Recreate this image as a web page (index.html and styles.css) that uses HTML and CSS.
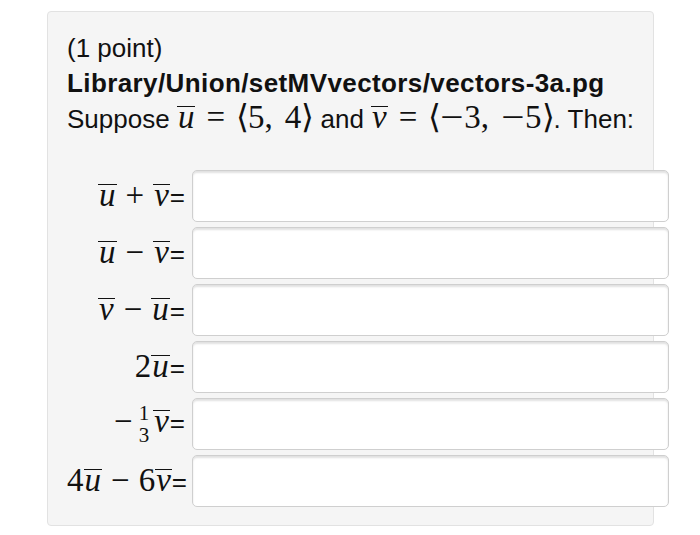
FILE: index.html
```html
<!DOCTYPE html>
<html>
<head>
<meta charset="utf-8">
<link rel="stylesheet" href="styles.css">
</head>
<body>
<div class="panel">
  <div class="line">(1 point)</div>
  <div class="line bold">Library/Union/setMVvectors/vectors-3a.pg</div>
  <div class="line">Suppose <span class="m"><span class="ov">u</span><span class="rel">=</span><span class="br">⟨</span>5,<span class="sp"></span>4<span class="br">⟩</span></span> and <span class="m"><span class="ov">v</span><span class="rel">=</span><span class="br">⟨</span><span class="um">−</span>3,<span class="sp"></span><span class="um">−</span>5<span class="br">⟩</span></span>. Then:</div>
  <div class="rows">
    <div class="row"><div class="lab"><span class="m"><span class="ov">u</span><span class="op">+</span><span class="ov">v</span></span>=</div><div class="inp"></div></div>
    <div class="row"><div class="lab"><span class="m"><span class="ov">u</span><span class="op">−</span><span class="ov">v</span></span>=</div><div class="inp"></div></div>
    <div class="row"><div class="lab"><span class="m"><span class="ov">v</span><span class="op">−</span><span class="ov">u</span></span>=</div><div class="inp"></div></div>
    <div class="row"><div class="lab"><span class="m">2<span class="ov">u</span></span>=</div><div class="inp"></div></div>
    <div class="row"><div class="lab"><span class="m">−<span class="frac"><span class="num">1</span><span class="den">3</span></span><span class="ov">v</span></span>=</div><div class="inp"></div></div>
    <div class="row"><div class="lab"><span class="m">4<span class="ov">u</span><span class="op">−</span>6<span class="ov">v</span></span>=</div><div class="inp"></div></div>
  </div>
</div>
</body>
</html>
```
FILE: styles.css
```css
html, body {
  margin: 0;
  padding: 0;
  background: #ffffff;
}
body {
  font-family: "Liberation Sans", Arial, sans-serif;
  color: #111;
  font-size: 26px;
}
.panel {
  margin: 11px 0 0 47px;
  width: 567px;
  padding: 19px 19px 18px 19px;
  background: #f5f5f5;
  border: 1px solid #e2e2e2;
  border-radius: 4px;
  box-sizing: content-box;
}
.line {
  line-height: 35px;
  height: 35px;
  white-space: nowrap;
}
.bold {
  font-weight: bold;
  letter-spacing: 0.4px;
}
.m {
  font-family: "Liberation Serif", "Times New Roman", serif;
  font-size: 33px;
  line-height: 1;
  letter-spacing: 0;
}
.ov {
  display: inline-block;
  font-style: italic;
  line-height: 0.63em;
  border-top: 1.6px solid #111;
  padding: 0 1px 0 1px;
}
.op {
  margin: 0 9px;
}
.rel {
  margin: 0 11px;
}
.br {
  display: inline-block;
  width: 12px;
  text-align: center;
}
.um {
  display: inline-block;
  width: 24px;
  text-align: center;
  transform: scaleX(1.25);
}
.sp {
  display: inline-block;
  width: 12px;
}
.rows {
  margin-top: 34px;
  display: flex;
  flex-direction: column;
  gap: 5px;
}
.row {
  display: flex;
  align-items: center;
  height: 52px;
}
.lab {
  width: 125px;
  flex: none;
  text-align: right;
  padding-right: 7px;
  box-sizing: border-box;
  white-space: nowrap;
}
.inp {
  width: 477px;
  height: 52px;
  flex: none;
  box-sizing: border-box;
  background: #fff;
  border: 1px solid #cfcfcf;
  border-radius: 5px;
  box-shadow: inset 0 2px 2px rgba(0,0,0,0.12);
}
.frac {
  display: inline-flex;
  flex-direction: column;
  align-items: center;
  vertical-align: middle;
  font-size: 21px;
  line-height: 22px;
  margin: 0 4px 0 6px;
}
```
